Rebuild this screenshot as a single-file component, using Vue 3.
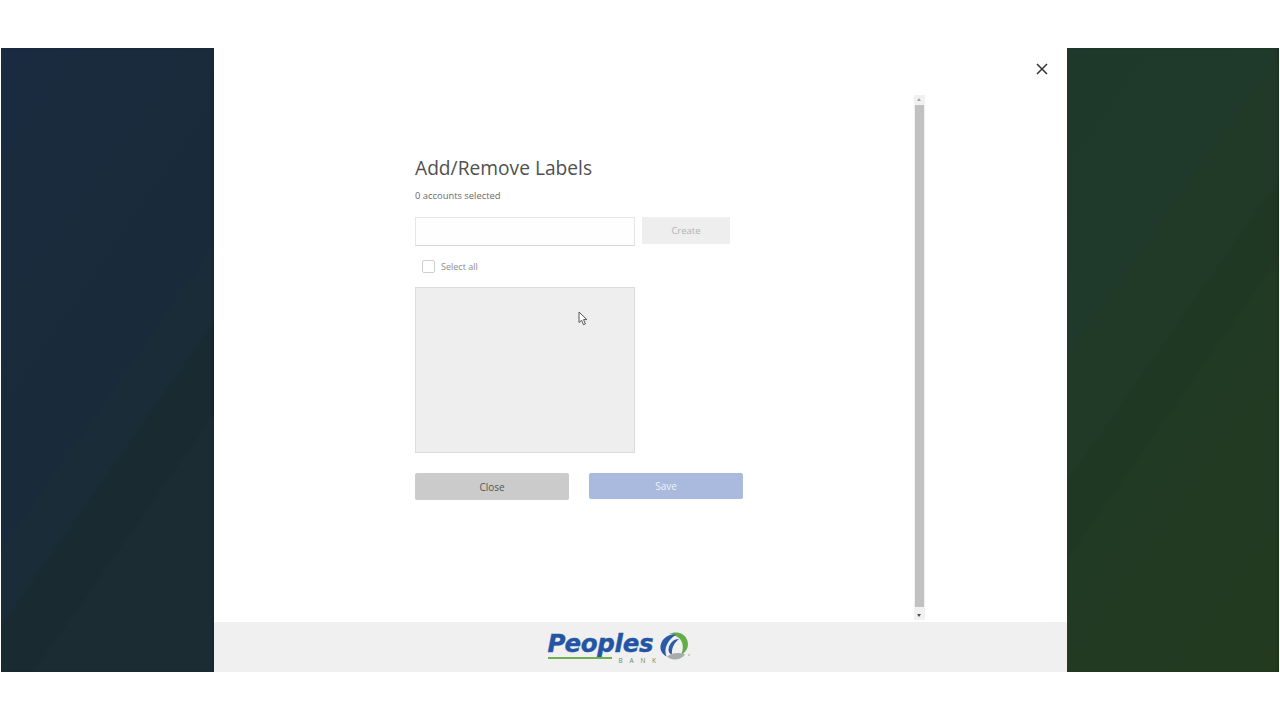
<script setup>
const title = 'Add/Remove Labels'
</script>

<template>
  <div class="stage">
    <aside class="side side-left"></aside>
    <main class="main">
      <button class="close-x" aria-label="Close">
        <svg width="12" height="12" viewBox="0 0 12 12"><path d="M1 1l10 10M11 1L1 11" stroke="#333" stroke-width="1.5" fill="none" /></svg>
      </button>
      <div class="body">
        <div class="dialog">
          <div class="form">
            <h1 class="title">{{ title }}</h1>
            <p class="count">0 accounts selected</p>
            <div class="create-row">
              <input class="name-input" type="text" />
              <button class="create">Create</button>
            </div>
            <label class="select-all">
              <span class="check"></span>
              <span>Select all</span>
            </label>
            <div class="list"></div>
            <div class="actions">
              <button class="btn btn-close">Close</button>
              <button class="btn btn-save">Save</button>
            </div>
          </div>
          <div class="scrollbar">
            <span class="arrow arrow-up"></span>
            <span class="thumb"></span>
            <span class="arrow arrow-down"></span>
          </div>
        </div>
      </div>
      <footer class="footer">
        <div class="logo">
          <div class="wordmark">
            <span class="peoples">Peoples</span>
            <div class="tagline"><span class="rule"></span><span class="bank">BANK</span></div>
          </div>
          <svg class="mark" width="32" height="30" viewBox="0 0 32 30">
            <path d="M10 2C16-1 26 0 28.500 9c1.500 6-1 11-6.500 14 2.500-5 2.500-12-1-16-3-3-7-5-11-5z" fill="#62ad4a" />
            <path d="M17 3C10 1 2.500 7 1.500 14c-.5 4 1.500 8 6 10.500-1.500-4-1.500-8 .5-12 2-4 5-7.500 9-9.500z" fill="#2a5ba6" />
            <path d="M20 7c-6 0-10 5-10.500 10.500 0 2.500 1 4.500 3.500 5 -.5-6 1.500-11 7-15.500z" fill="#2a5ba6" />
            <path d="M8 24.500c5-4 13-4.500 18-2-4 5.500-13 7-18 2z" fill="#a8acaa" />
            <circle cx="30" cy="23" r=".9" fill="#bdbdbd" />
          </svg>
        </div>
      </footer>
      <svg class="cursor" width="11" height="15" viewBox="0 0 11 15">
        <path d="M1 1v10.500l2.600-2.200 1.900 4.400 1.900-.8-1.900-4.300h3.400z" fill="#fff" stroke="#555" stroke-width="1" stroke-linejoin="round" />
      </svg>
    </main>
    <aside class="side side-right"></aside>
  </div>
</template>

<style scoped>
.stage {
  display: flex;
  height: 624px;
  margin-top: 48px;
  padding: 0 1px;
  font-family: "Open Sans", "Liberation Sans", sans-serif;
}
.side { flex: none; box-shadow: inset -2px 0 2px rgba(0, 0, 0, .12); }
.side-left {
  width: 213px;
  background: linear-gradient(125deg, #1a2b42 0%, #192b3d 14%, #192b3a 54%, #1a2c37 54.500%, #1a2c37 62%, #192a31 62.500%, #192a31 72%, #1b2c33 72.500%, #1b2c33 100%);
}
.side-right {
  width: 212px;
  background: linear-gradient(125deg, #1e382b 0%, #1f392a 33%, #203a27 33.500%, #203a27 46.500%, #1f3823 47%, #1f3823 55%, #213a24 55.500%, #233a1f 100%);
}
.main {
  position: relative;
  flex: 1;
  min-width: 0;
  display: flex;
  flex-direction: column;
  background: #fff;
}
.close-x {
  position: absolute;
  top: 14.500px;
  left: 822px;
  width: 12px;
  height: 12px;
  padding: 0;
  border: 0;
  background: none;
  line-height: 0;
}
.body { flex: 1; min-height: 0; padding: 47px 0 2px 201px; }
.dialog { display: flex; width: 510px; height: 525px; }
.form { flex: 1; min-width: 0; padding-top: 61px; }
.title {
  margin: 0;
  font-size: 19.200px;
  font-weight: 400;
  line-height: 24px;
  color: #505050;
}
.count {
  margin: 9px 0 0;
  font-size: 9.400px;
  line-height: 14px;
  color: #6a6a6a;
}
.create-row { display: flex; align-items: flex-start; gap: 7px; margin-top: 14px; }
.name-input {
  width: 220px;
  height: 29px;
  box-sizing: border-box;
  border: 1px solid #e6e6e6;
  border-bottom-color: #d8d8d8;
  background: #fefefe;
}
.create {
  width: 88px;
  height: 27px;
  border: 0;
  border-radius: 1px;
  background: #eeeeee;
  color: #b3b3b3;
  font: 9.500px "Open Sans", "Liberation Sans", sans-serif;
}
.select-all {
  display: flex;
  align-items: center;
  gap: 6px;
  margin: 14px 0 0 7px;
  height: 13px;
  font-size: 9px;
  color: #8c8c8c;
}
.check {
  width: 13px;
  height: 13px;
  box-sizing: border-box;
  border: 1px solid #cfcfcf;
  border-radius: 2px;
}
.list {
  width: 220px;
  height: 166px;
  box-sizing: border-box;
  margin-top: 14px;
  border: 1px solid #dcdcdc;
  background: #eeeeee;
}
.actions { display: flex; gap: 20px; margin-top: 20px; align-items: flex-start; }
.btn {
  width: 154px;
  border: 0;
  border-radius: 2px;
  font: 400 10px "Open Sans", "Liberation Sans", sans-serif;
}
.btn-close { height: 27px; background: #cbcbcb; color: #555; }
.btn-save { height: 26px; background: #a9bade; color: #eef1f8; }
.scrollbar { flex: none; width: 11px; margin-left: -1px; display: flex; flex-direction: column; background: #f1f1f1; }
.thumb { flex: 1; margin: 0 1px; background: #c1c1c1; }
.arrow { flex: none; position: relative; height: 10px; }
.arrow-down { height: 13px; }
.arrow::after {
  content: "";
  position: absolute;
  left: 3px;
  width: 0;
  height: 0;
  border-left: 2.500px solid transparent;
  border-right: 2.500px solid transparent;
}
.arrow-up::after { top: 3px; border-bottom: 3px solid #a8a8a8; }
.arrow-down::after { top: 7px; border-top: 3px solid #505050; }
.footer {
  flex: none;
  height: 50px;
  display: flex;
  align-items: flex-start;
  justify-content: center;
  padding-right: 43px;
  background: #f0f0f0;
}
.logo { display: flex; align-items: flex-start; gap: 3px; margin-top: 11px; }
.wordmark { width: 108px; }
.peoples {
  display: block;
  font: italic 700 24.500px/22px "DejaVu Sans", sans-serif;
  letter-spacing: -.3px;
  color: #2455a4;
  white-space: nowrap;
  -webkit-text-stroke: .4px #2455a4;
}
.tagline { display: flex; align-items: flex-start; gap: 7px; height: 8px; margin-top: 2px; }
.rule { flex: none; width: 64px; height: 2px; background: #6cb04f; }
.bank {
  font: 6.500px/8px "Open Sans", sans-serif;
  letter-spacing: 6.800px;
  color: #5f8f55;
  white-space: nowrap;
}
.mark { flex: none; margin-top: -1px; }
.cursor { position: absolute; top: 263px; left: 364px; }
</style>

<style>
html, body { background: #fff; }
</style>
